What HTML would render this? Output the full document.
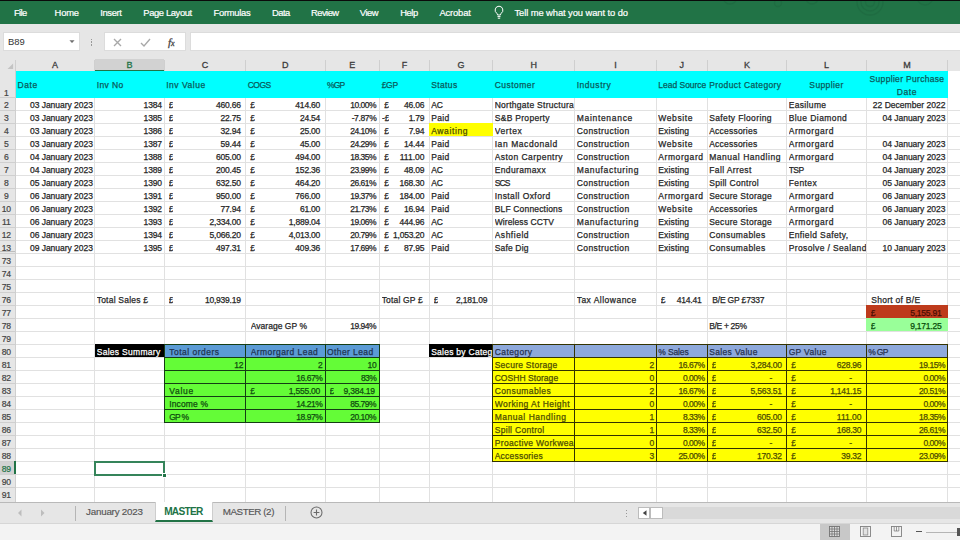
<!DOCTYPE html><html><head><meta charset="utf-8"><title>MASTER - Excel</title><style>
*{box-sizing:border-box;margin:0;padding:0}
html,body{width:960px;height:540px;overflow:hidden;background:#fff}
body{position:relative;font-family:"Liberation Sans",sans-serif;font-size:8.5px;color:#262626}
.a{position:absolute}
.c{position:absolute;height:13px;line-height:13px;white-space:nowrap;overflow:hidden;padding-top:1.5px;-webkit-text-stroke:0.25px}
.r{text-align:right;overflow:visible}
.ce{text-align:center}
.rib{position:absolute;top:5.8px;-webkit-text-stroke:0.2px;height:14px;line-height:14px;color:#fff;font-size:9.4px;white-space:nowrap}
.ch{position:absolute;top:58.8px;-webkit-text-stroke:0.3px;height:12.3px;line-height:13px;text-align:center;color:#3c3c3c;font-size:9px;}
.rhd{position:absolute;-webkit-text-stroke:0.2px;left:-1.5px;width:15.5px;height:13px;line-height:13px;text-align:center;color:#444;font-size:8.6px;padding-top:2.2px;letter-spacing:-0.25px;overflow:hidden}
.gl{position:absolute;background:#e1e1e1}
.bd{position:absolute;background:#1a1a00}
</style></head><body><div id="w" style="position:absolute;left:0;top:0;width:960px;height:540px;overflow:hidden">
<div class="a" style="left:0;top:0;width:960px;height:24px;background:#217346"></div>
<div class="a" style="left:0;top:0;width:960px;height:1px;background:#0a0a0a"></div>
<svg class="a" style="left:700px;top:1px" width="260" height="23" viewBox="0 0 260 23"><g fill="none" stroke="#1f6c42" stroke-width="1.3"><circle cx="170" cy="1" r="4.5"/><circle cx="170" cy="1" r="9"/><circle cx="170" cy="1" r="13"/><circle cx="78" cy="2" r="3.5"/><circle cx="112" cy="-3" r="6"/><circle cx="30" cy="-4" r="7"/><circle cx="225" cy="-4" r="8"/></g></svg>
<div class="rib" style="left:14.0px;letter-spacing:-0.662px">File</div>
<div class="rib" style="left:54.55px;letter-spacing:-0.156px">Home</div>
<div class="rib" style="left:100.3px;letter-spacing:-0.385px">Insert</div>
<div class="rib" style="left:143.3px;letter-spacing:-0.372px">Page Layout</div>
<div class="rib" style="left:213.5px;letter-spacing:-0.272px">Formulas</div>
<div class="rib" style="left:272.0px;letter-spacing:-0.539px">Data</div>
<div class="rib" style="left:311.0px;letter-spacing:-0.520px">Review</div>
<div class="rib" style="left:359.8px;letter-spacing:-0.451px">View</div>
<div class="rib" style="left:400.3px;letter-spacing:-0.483px">Help</div>
<div class="rib" style="left:439.5px;letter-spacing:-0.171px">Acrobat</div>
<div class="rib" style="left:514.5px;letter-spacing:-0.085px">Tell me what you want to do</div>
<svg class="a" style="left:493px;top:5px" width="12" height="15" viewBox="0 0 12 15"><path d="M6 1.2a3.9 3.9 0 0 0-2.2 7.1c.5.5.7 1 .7 1.7h3c0-.7.2-1.2.7-1.7A3.9 3.9 0 0 0 6 1.2z" fill="none" stroke="#fff" stroke-width="1"/><path d="M4.5 11.6h3M4.8 13.2h2.4" stroke="#fff" stroke-width="1" fill="none"/></svg>
<div class="a" style="left:0;top:24px;width:960px;height:35px;background:#e6e6e6"></div>
<div class="a" style="left:3px;top:32px;width:76.5px;height:19.3px;background:#fff;border:1px solid #dcdcdc"></div>
<div class="a" style="left:8px;top:35px;height:14px;line-height:14px;font-size:9.4px;color:#333">B89</div>
<svg class="a" style="left:69.3px;top:39.8px" width="6" height="3.4" viewBox="0 0 7 4"><path d="M0.5 0.3h6L3.5 3.6z" fill="#707070"/></svg>
<div class="a" style="left:91px;top:38.5px;width:1.2px;height:1.4px;background:#999"></div><div class="a" style="left:91px;top:41.4px;width:1.2px;height:1.4px;background:#999"></div><div class="a" style="left:91px;top:44.3px;width:1.2px;height:1.4px;background:#999"></div>
<div class="a" style="left:103.7px;top:32px;width:82.8px;height:19.3px;background:#fff;border:1px solid #dcdcdc"></div>
<svg class="a" style="left:113px;top:37.5px" width="9" height="9" viewBox="0 0 9 9"><path d="M1 1l7 7M8 1l-7 7" stroke="#a8a8a8" stroke-width="1.35" fill="none"/></svg>
<svg class="a" style="left:140px;top:37.5px" width="11" height="9" viewBox="0 0 11 9"><path d="M1 5l3 3L10 1" stroke="#a8a8a8" stroke-width="1.35" fill="none"/></svg>
<div class="a" style="left:168px;top:35px;height:14px;line-height:14px;font-size:11px;color:#444;-webkit-text-stroke:0.3px;font-family:'Liberation Serif',serif;font-style:italic">f<span style="font-size:8px">x</span></div>
<div class="a" style="left:190px;top:32px;width:771px;height:19.3px;background:#fff;border:1px solid #dcdcdc"></div>
<div class="a" style="left:0;top:59px;width:960px;height:12.3px;background:#e6e6e6"></div>
<svg class="a" style="left:7px;top:62.5px" width="6.5" height="6.5" viewBox="0 0 8 8"><path d="M7.5 0.5v7h-7z" fill="#c3c3c3"/></svg>
<div class="ch" style="left:15.5px;width:79.2px">A</div>
<div class="a" style="left:94.7px;top:59px;width:69.49999999999999px;height:12.3px;background:#d2d2d2;border-bottom:1.3px solid #217346"></div>
<div class="ch" style="left:94.7px;width:69.49999999999999px;color:#217346">B</div>
<div class="ch" style="left:164.2px;width:81.5px">C</div>
<div class="ch" style="left:245.7px;width:79.30000000000001px">D</div>
<div class="ch" style="left:325.0px;width:54.69999999999999px">E</div>
<div class="ch" style="left:379.7px;width:49.5px">F</div>
<div class="ch" style="left:429.2px;width:63.5px">G</div>
<div class="ch" style="left:492.7px;width:82.00000000000006px">H</div>
<div class="ch" style="left:574.7px;width:81.59999999999991px">I</div>
<div class="ch" style="left:656.3px;width:50.90000000000009px">J</div>
<div class="ch" style="left:707.2px;width:79.5px">K</div>
<div class="ch" style="left:786.7px;width:79.59999999999991px">L</div>
<div class="ch" style="left:866.3px;width:81.40000000000009px">M</div>
<div class="a" style="left:15.0px;top:60px;width:1px;height:11px;background:#cfcfcf"></div>
<div class="a" style="left:94.2px;top:60px;width:1px;height:11px;background:#cfcfcf"></div>
<div class="a" style="left:163.7px;top:60px;width:1px;height:11px;background:#cfcfcf"></div>
<div class="a" style="left:245.2px;top:60px;width:1px;height:11px;background:#cfcfcf"></div>
<div class="a" style="left:324.5px;top:60px;width:1px;height:11px;background:#cfcfcf"></div>
<div class="a" style="left:379.2px;top:60px;width:1px;height:11px;background:#cfcfcf"></div>
<div class="a" style="left:428.7px;top:60px;width:1px;height:11px;background:#cfcfcf"></div>
<div class="a" style="left:492.2px;top:60px;width:1px;height:11px;background:#cfcfcf"></div>
<div class="a" style="left:574.2px;top:60px;width:1px;height:11px;background:#cfcfcf"></div>
<div class="a" style="left:655.8px;top:60px;width:1px;height:11px;background:#cfcfcf"></div>
<div class="a" style="left:706.7px;top:60px;width:1px;height:11px;background:#cfcfcf"></div>
<div class="a" style="left:786.2px;top:60px;width:1px;height:11px;background:#cfcfcf"></div>
<div class="a" style="left:865.8px;top:60px;width:1px;height:11px;background:#cfcfcf"></div>
<div class="a" style="left:947.2px;top:60px;width:1px;height:11px;background:#cfcfcf"></div>
<div class="a" style="left:0;top:71.3px;width:15.5px;height:431px;background:#e6e6e6"></div>
<div class="rhd" style="top:84.5px">1</div>
<div class="rhd" style="top:97.3px">2</div>
<div class="rhd" style="top:110.3px">3</div>
<div class="rhd" style="top:123.3px">4</div>
<div class="rhd" style="top:136.3px">5</div>
<div class="rhd" style="top:149.3px">6</div>
<div class="rhd" style="top:162.3px">7</div>
<div class="rhd" style="top:175.3px">8</div>
<div class="rhd" style="top:188.3px">9</div>
<div class="rhd" style="top:201.3px">10</div>
<div class="rhd" style="top:214.3px">11</div>
<div class="rhd" style="top:227.3px">12</div>
<div class="rhd" style="top:240.3px">13</div>
<div class="rhd" style="top:253.3px">73</div>
<div class="rhd" style="top:266.3px">74</div>
<div class="rhd" style="top:279.3px">75</div>
<div class="rhd" style="top:292.3px">76</div>
<div class="rhd" style="top:305.3px">77</div>
<div class="rhd" style="top:318.3px">78</div>
<div class="rhd" style="top:331.3px">79</div>
<div class="rhd" style="top:344.3px">80</div>
<div class="rhd" style="top:357.3px">81</div>
<div class="rhd" style="top:370.3px">82</div>
<div class="rhd" style="top:383.3px">83</div>
<div class="rhd" style="top:396.3px">84</div>
<div class="rhd" style="top:409.3px">85</div>
<div class="rhd" style="top:422.3px">86</div>
<div class="rhd" style="top:435.3px">87</div>
<div class="rhd" style="top:448.3px">88</div>
<div class="a" style="left:0;top:461.3px;width:15.5px;height:13px;background:#d2d2d2;border-right:1.3px solid #217346"></div>
<div class="rhd" style="top:461.3px;color:#217346">89</div>
<div class="rhd" style="top:474.3px">90</div>
<div class="rhd" style="top:487.3px">91</div>
<div class="a" style="left:0;top:97px;width:15.5px;height:1px;background:#cfcfcf"></div>
<div class="a" style="left:0;top:109.8px;width:15.5px;height:1px;background:#cfcfcf"></div>
<div class="a" style="left:0;top:122.8px;width:15.5px;height:1px;background:#cfcfcf"></div>
<div class="a" style="left:0;top:135.8px;width:15.5px;height:1px;background:#cfcfcf"></div>
<div class="a" style="left:0;top:148.8px;width:15.5px;height:1px;background:#cfcfcf"></div>
<div class="a" style="left:0;top:161.8px;width:15.5px;height:1px;background:#cfcfcf"></div>
<div class="a" style="left:0;top:174.8px;width:15.5px;height:1px;background:#cfcfcf"></div>
<div class="a" style="left:0;top:187.8px;width:15.5px;height:1px;background:#cfcfcf"></div>
<div class="a" style="left:0;top:200.8px;width:15.5px;height:1px;background:#cfcfcf"></div>
<div class="a" style="left:0;top:213.8px;width:15.5px;height:1px;background:#cfcfcf"></div>
<div class="a" style="left:0;top:226.8px;width:15.5px;height:1px;background:#cfcfcf"></div>
<div class="a" style="left:0;top:239.8px;width:15.5px;height:1px;background:#cfcfcf"></div>
<div class="a" style="left:0;top:252.8px;width:15.5px;height:1px;background:#cfcfcf"></div>
<div class="a" style="left:0;top:265.8px;width:15.5px;height:1px;background:#cfcfcf"></div>
<div class="a" style="left:0;top:278.8px;width:15.5px;height:1px;background:#cfcfcf"></div>
<div class="a" style="left:0;top:291.8px;width:15.5px;height:1px;background:#cfcfcf"></div>
<div class="a" style="left:0;top:304.8px;width:15.5px;height:1px;background:#cfcfcf"></div>
<div class="a" style="left:0;top:317.8px;width:15.5px;height:1px;background:#cfcfcf"></div>
<div class="a" style="left:0;top:330.8px;width:15.5px;height:1px;background:#cfcfcf"></div>
<div class="a" style="left:0;top:343.8px;width:15.5px;height:1px;background:#cfcfcf"></div>
<div class="a" style="left:0;top:356.8px;width:15.5px;height:1px;background:#cfcfcf"></div>
<div class="a" style="left:0;top:369.8px;width:15.5px;height:1px;background:#cfcfcf"></div>
<div class="a" style="left:0;top:382.8px;width:15.5px;height:1px;background:#cfcfcf"></div>
<div class="a" style="left:0;top:395.8px;width:15.5px;height:1px;background:#cfcfcf"></div>
<div class="a" style="left:0;top:408.8px;width:15.5px;height:1px;background:#cfcfcf"></div>
<div class="a" style="left:0;top:421.8px;width:15.5px;height:1px;background:#cfcfcf"></div>
<div class="a" style="left:0;top:434.8px;width:15.5px;height:1px;background:#cfcfcf"></div>
<div class="a" style="left:0;top:447.8px;width:15.5px;height:1px;background:#cfcfcf"></div>
<div class="a" style="left:0;top:460.8px;width:15.5px;height:1px;background:#cfcfcf"></div>
<div class="a" style="left:0;top:473.8px;width:15.5px;height:1px;background:#cfcfcf"></div>
<div class="a" style="left:0;top:486.8px;width:15.5px;height:1px;background:#cfcfcf"></div>
<div class="a" style="left:0;top:250.8px;width:15.5px;height:1px;background:#bdbdbd"></div>
<div class="a" style="left:15px;top:71.3px;width:1px;height:431px;background:#cfcfcf"></div>
<div class="gl" style="left:94.2px;top:97.3px;width:1px;height:405px"></div>
<div class="gl" style="left:163.7px;top:97.3px;width:1px;height:405px"></div>
<div class="gl" style="left:245.2px;top:97.3px;width:1px;height:405px"></div>
<div class="gl" style="left:324.5px;top:97.3px;width:1px;height:405px"></div>
<div class="gl" style="left:379.2px;top:97.3px;width:1px;height:405px"></div>
<div class="gl" style="left:428.7px;top:97.3px;width:1px;height:405px"></div>
<div class="gl" style="left:492.2px;top:97.3px;width:1px;height:405px"></div>
<div class="gl" style="left:574.2px;top:97.3px;width:1px;height:405px"></div>
<div class="gl" style="left:655.8px;top:97.3px;width:1px;height:405px"></div>
<div class="gl" style="left:706.7px;top:97.3px;width:1px;height:405px"></div>
<div class="gl" style="left:786.2px;top:97.3px;width:1px;height:405px"></div>
<div class="gl" style="left:865.8px;top:97.3px;width:1px;height:405px"></div>
<div class="gl" style="left:947.2px;top:97.3px;width:1px;height:405px"></div>
<div class="gl" style="left:15.5px;top:109.8px;width:944.5px;height:1px"></div>
<div class="gl" style="left:15.5px;top:122.8px;width:944.5px;height:1px"></div>
<div class="gl" style="left:15.5px;top:135.8px;width:944.5px;height:1px"></div>
<div class="gl" style="left:15.5px;top:148.8px;width:944.5px;height:1px"></div>
<div class="gl" style="left:15.5px;top:161.8px;width:944.5px;height:1px"></div>
<div class="gl" style="left:15.5px;top:174.8px;width:944.5px;height:1px"></div>
<div class="gl" style="left:15.5px;top:187.8px;width:944.5px;height:1px"></div>
<div class="gl" style="left:15.5px;top:200.8px;width:944.5px;height:1px"></div>
<div class="gl" style="left:15.5px;top:213.8px;width:944.5px;height:1px"></div>
<div class="gl" style="left:15.5px;top:226.8px;width:944.5px;height:1px"></div>
<div class="gl" style="left:15.5px;top:239.8px;width:944.5px;height:1px"></div>
<div class="gl" style="left:15.5px;top:252.8px;width:944.5px;height:1px"></div>
<div class="gl" style="left:15.5px;top:265.8px;width:944.5px;height:1px"></div>
<div class="gl" style="left:15.5px;top:278.8px;width:944.5px;height:1px"></div>
<div class="gl" style="left:15.5px;top:291.8px;width:944.5px;height:1px"></div>
<div class="gl" style="left:15.5px;top:304.8px;width:944.5px;height:1px"></div>
<div class="gl" style="left:15.5px;top:317.8px;width:944.5px;height:1px"></div>
<div class="gl" style="left:15.5px;top:330.8px;width:944.5px;height:1px"></div>
<div class="gl" style="left:15.5px;top:343.8px;width:944.5px;height:1px"></div>
<div class="gl" style="left:15.5px;top:356.8px;width:944.5px;height:1px"></div>
<div class="gl" style="left:15.5px;top:369.8px;width:944.5px;height:1px"></div>
<div class="gl" style="left:15.5px;top:382.8px;width:944.5px;height:1px"></div>
<div class="gl" style="left:15.5px;top:395.8px;width:944.5px;height:1px"></div>
<div class="gl" style="left:15.5px;top:408.8px;width:944.5px;height:1px"></div>
<div class="gl" style="left:15.5px;top:421.8px;width:944.5px;height:1px"></div>
<div class="gl" style="left:15.5px;top:434.8px;width:944.5px;height:1px"></div>
<div class="gl" style="left:15.5px;top:447.8px;width:944.5px;height:1px"></div>
<div class="gl" style="left:15.5px;top:460.8px;width:944.5px;height:1px"></div>
<div class="gl" style="left:15.5px;top:473.8px;width:944.5px;height:1px"></div>
<div class="gl" style="left:15.5px;top:486.8px;width:944.5px;height:1px"></div>
<div class="a" style="left:15.5px;top:71px;width:932.2px;height:27px;background:#00ffff"></div>
<div class="c" style="left:17.5px;top:77.5px;color:#0a5a5a;overflow:visible;letter-spacing:0.581px;">Date</div>
<div class="c" style="left:96.7px;top:77.5px;color:#0a5a5a;overflow:visible;letter-spacing:0.399px;">Inv No</div>
<div class="c" style="left:166.2px;top:77.5px;color:#0a5a5a;overflow:visible;letter-spacing:0.518px;">Inv Value</div>
<div class="c" style="left:247.7px;top:77.5px;color:#0a5a5a;overflow:visible;letter-spacing:-0.512px;">COGS</div>
<div class="c" style="left:327.0px;top:77.5px;color:#0a5a5a;overflow:visible;letter-spacing:-0.832px;">%GP</div>
<div class="c" style="left:381.7px;top:77.5px;color:#0a5a5a;overflow:visible;letter-spacing:-0.322px;">£GP</div>
<div class="c" style="left:431.2px;top:77.5px;color:#0a5a5a;overflow:visible;letter-spacing:0.378px;">Status</div>
<div class="c" style="left:494.7px;top:77.5px;color:#0a5a5a;overflow:visible;letter-spacing:0.465px;">Customer</div>
<div class="c" style="left:576.7px;top:77.5px;color:#0a5a5a;overflow:visible;letter-spacing:0.530px;">Industry</div>
<div class="c" style="left:658.3px;top:77.5px;color:#0a5a5a;overflow:visible;letter-spacing:-0.018px;">Lead Source</div>
<div class="c" style="left:709.2px;top:77.5px;color:#0a5a5a;overflow:visible;letter-spacing:0.382px;">Product Category</div>
<div class="c ce" style="left:786.7px;width:79.59999999999991px;top:77.5px;color:#0a5a5a;letter-spacing:0.394px;">Supplier</div>
<div class="c ce" style="left:866.3px;width:81.40000000000009px;top:71.5px;color:#0a5a5a;letter-spacing:0.316px;">Supplier Purchase</div>
<div class="c ce" style="left:866.3px;width:81.40000000000009px;top:84.5px;color:#0a5a5a;letter-spacing:0.581px;">Date</div>
<div class="a" style="left:429.2px;top:123.3px;width:63.5px;height:13.000000000000014px;background:#ffff00"></div>
<div class="c r" style="left:15.5px;top:97.3px;width:77.37px;letter-spacing:-0.028px;">03 January 2023</div>
<div class="c r" style="left:94.7px;top:97.3px;width:67.12px;letter-spacing:-0.177px;">1384</div>
<div class="c" style="left:168.7px;top:97.3px;">£</div>
<div class="c r" style="left:164.2px;top:97.3px;width:76.58px;letter-spacing:-0.216px;">460.66</div>
<div class="c" style="left:250.2px;top:97.3px;">£</div>
<div class="c r" style="left:245.7px;top:97.3px;width:74.38px;letter-spacing:-0.216px;">414.60</div>
<div class="c r" style="left:325.0px;top:97.3px;width:51.23px;letter-spacing:-0.471px;">10.00%</div>
<div class="c" style="left:384.2px;top:97.3px;">£</div>
<div class="c r" style="left:379.7px;top:97.3px;width:44.58px;letter-spacing:-0.224px;">46.06</div>
<div class="c" style="left:431.2px;top:97.3px;width:61.00px;letter-spacing:-0.158px;">AC</div>
<div class="c" style="left:494.7px;top:97.3px;width:79.50px;letter-spacing:0.270px;">Northgate Structura</div>
<div class="c" style="left:576.7px;top:97.3px;width:79.10px;letter-spacing:0.000px;"></div>
<div class="c" style="left:658.3px;top:97.3px;width:48.40px;letter-spacing:0.000px;"></div>
<div class="c" style="left:709.2px;top:97.3px;width:77.00px;letter-spacing:0.000px;"></div>
<div class="c" style="left:788.7px;top:97.3px;width:77.10px;letter-spacing:0.345px;">Easilume</div>
<div class="c r" style="left:866.3px;top:97.3px;width:79.23px;letter-spacing:0.031px;">22 December 2022</div>
<div class="c r" style="left:15.5px;top:110.3px;width:77.37px;letter-spacing:-0.028px;">03 January 2023</div>
<div class="c r" style="left:94.7px;top:110.3px;width:67.12px;letter-spacing:-0.177px;">1385</div>
<div class="c" style="left:168.7px;top:110.3px;">£</div>
<div class="c r" style="left:164.2px;top:110.3px;width:76.58px;letter-spacing:-0.224px;">22.75</div>
<div class="c" style="left:250.2px;top:110.3px;">£</div>
<div class="c r" style="left:245.7px;top:110.3px;width:74.38px;letter-spacing:-0.224px;">24.54</div>
<div class="c r" style="left:325.0px;top:110.3px;width:51.33px;letter-spacing:-0.372px;">-7.87%</div>
<div class="c" style="left:381.9px;top:110.3px;">-£</div>
<div class="c r" style="left:379.7px;top:110.3px;width:44.56px;letter-spacing:-0.236px;">1.79</div>
<div class="c" style="left:431.2px;top:110.3px;width:61.00px;letter-spacing:0.361px;">Paid</div>
<div class="c" style="left:494.7px;top:110.3px;width:79.50px;letter-spacing:0.300px;">S&amp;B Property</div>
<div class="c" style="left:576.7px;top:110.3px;width:79.10px;letter-spacing:0.694px;">Maintenance</div>
<div class="c" style="left:658.3px;top:110.3px;width:48.40px;letter-spacing:0.590px;">Website</div>
<div class="c" style="left:709.2px;top:110.3px;width:77.00px;letter-spacing:0.366px;">Safety Flooring</div>
<div class="c" style="left:788.7px;top:110.3px;width:77.10px;letter-spacing:0.434px;">Blue Diamond</div>
<div class="c r" style="left:866.3px;top:110.3px;width:79.17px;letter-spacing:-0.028px;">04 January 2023</div>
<div class="c r" style="left:15.5px;top:123.3px;width:77.37px;letter-spacing:-0.028px;">03 January 2023</div>
<div class="c r" style="left:94.7px;top:123.3px;width:67.12px;letter-spacing:-0.177px;">1386</div>
<div class="c" style="left:168.7px;top:123.3px;">£</div>
<div class="c r" style="left:164.2px;top:123.3px;width:76.58px;letter-spacing:-0.224px;">32.94</div>
<div class="c" style="left:250.2px;top:123.3px;">£</div>
<div class="c r" style="left:245.7px;top:123.3px;width:74.38px;letter-spacing:-0.224px;">25.00</div>
<div class="c r" style="left:325.0px;top:123.3px;width:51.23px;letter-spacing:-0.471px;">24.10%</div>
<div class="c" style="left:384.2px;top:123.3px;">£</div>
<div class="c r" style="left:379.7px;top:123.3px;width:44.56px;letter-spacing:-0.236px;">7.94</div>
<div class="c" style="left:431.2px;top:123.3px;width:61.00px;letter-spacing:0.617px;color:#4d4d00;">Awaiting</div>
<div class="c" style="left:494.7px;top:123.3px;width:79.50px;letter-spacing:0.603px;">Vertex</div>
<div class="c" style="left:576.7px;top:123.3px;width:79.10px;letter-spacing:0.434px;">Construction</div>
<div class="c" style="left:658.3px;top:123.3px;width:48.40px;letter-spacing:0.133px;">Existing</div>
<div class="c" style="left:709.2px;top:123.3px;width:77.00px;letter-spacing:0.216px;">Accessories</div>
<div class="c" style="left:788.7px;top:123.3px;width:77.10px;letter-spacing:0.571px;">Armorgard</div>
<div class="c r" style="left:866.3px;top:123.3px;width:79.20px;letter-spacing:0.000px;"></div>
<div class="c r" style="left:15.5px;top:136.3px;width:77.37px;letter-spacing:-0.028px;">03 January 2023</div>
<div class="c r" style="left:94.7px;top:136.3px;width:67.12px;letter-spacing:-0.177px;">1387</div>
<div class="c" style="left:168.7px;top:136.3px;">£</div>
<div class="c r" style="left:164.2px;top:136.3px;width:76.58px;letter-spacing:-0.224px;">59.44</div>
<div class="c" style="left:250.2px;top:136.3px;">£</div>
<div class="c r" style="left:245.7px;top:136.3px;width:74.38px;letter-spacing:-0.224px;">45.00</div>
<div class="c r" style="left:325.0px;top:136.3px;width:51.23px;letter-spacing:-0.471px;">24.29%</div>
<div class="c" style="left:384.2px;top:136.3px;">£</div>
<div class="c r" style="left:379.7px;top:136.3px;width:44.58px;letter-spacing:-0.224px;">14.44</div>
<div class="c" style="left:431.2px;top:136.3px;width:61.00px;letter-spacing:0.361px;">Paid</div>
<div class="c" style="left:494.7px;top:136.3px;width:79.50px;letter-spacing:0.567px;">Ian Macdonald</div>
<div class="c" style="left:576.7px;top:136.3px;width:79.10px;letter-spacing:0.434px;">Construction</div>
<div class="c" style="left:658.3px;top:136.3px;width:48.40px;letter-spacing:0.590px;">Website</div>
<div class="c" style="left:709.2px;top:136.3px;width:77.00px;letter-spacing:0.216px;">Accessories</div>
<div class="c" style="left:788.7px;top:136.3px;width:77.10px;letter-spacing:0.571px;">Armorgard</div>
<div class="c r" style="left:866.3px;top:136.3px;width:79.17px;letter-spacing:-0.028px;">04 January 2023</div>
<div class="c r" style="left:15.5px;top:149.3px;width:77.37px;letter-spacing:-0.028px;">04 January 2023</div>
<div class="c r" style="left:94.7px;top:149.3px;width:67.12px;letter-spacing:-0.177px;">1388</div>
<div class="c" style="left:168.7px;top:149.3px;">£</div>
<div class="c r" style="left:164.2px;top:149.3px;width:76.58px;letter-spacing:-0.216px;">605.00</div>
<div class="c" style="left:250.2px;top:149.3px;">£</div>
<div class="c r" style="left:245.7px;top:149.3px;width:74.38px;letter-spacing:-0.216px;">494.00</div>
<div class="c r" style="left:325.0px;top:149.3px;width:51.23px;letter-spacing:-0.471px;">18.35%</div>
<div class="c" style="left:384.2px;top:149.3px;">£</div>
<div class="c r" style="left:379.7px;top:149.3px;width:44.79px;letter-spacing:-0.006px;">111.00</div>
<div class="c" style="left:431.2px;top:149.3px;width:61.00px;letter-spacing:0.361px;">Paid</div>
<div class="c" style="left:494.7px;top:149.3px;width:79.50px;letter-spacing:0.452px;">Aston Carpentry</div>
<div class="c" style="left:576.7px;top:149.3px;width:79.10px;letter-spacing:0.434px;">Construction</div>
<div class="c" style="left:658.3px;top:149.3px;width:48.40px;letter-spacing:0.571px;">Armorgard</div>
<div class="c" style="left:709.2px;top:149.3px;width:77.00px;letter-spacing:0.533px;">Manual Handling</div>
<div class="c" style="left:788.7px;top:149.3px;width:77.10px;letter-spacing:0.571px;">Armorgard</div>
<div class="c r" style="left:866.3px;top:149.3px;width:79.17px;letter-spacing:-0.028px;">04 January 2023</div>
<div class="c r" style="left:15.5px;top:162.3px;width:77.37px;letter-spacing:-0.028px;">04 January 2023</div>
<div class="c r" style="left:94.7px;top:162.3px;width:67.12px;letter-spacing:-0.177px;">1389</div>
<div class="c" style="left:168.7px;top:162.3px;">£</div>
<div class="c r" style="left:164.2px;top:162.3px;width:76.58px;letter-spacing:-0.216px;">200.45</div>
<div class="c" style="left:250.2px;top:162.3px;">£</div>
<div class="c r" style="left:245.7px;top:162.3px;width:74.38px;letter-spacing:-0.216px;">152.36</div>
<div class="c r" style="left:325.0px;top:162.3px;width:51.23px;letter-spacing:-0.471px;">23.99%</div>
<div class="c" style="left:384.2px;top:162.3px;">£</div>
<div class="c r" style="left:379.7px;top:162.3px;width:44.58px;letter-spacing:-0.224px;">48.09</div>
<div class="c" style="left:431.2px;top:162.3px;width:61.00px;letter-spacing:-0.158px;">AC</div>
<div class="c" style="left:494.7px;top:162.3px;width:79.50px;letter-spacing:0.366px;">Enduramaxx</div>
<div class="c" style="left:576.7px;top:162.3px;width:79.10px;letter-spacing:0.656px;">Manufacturing</div>
<div class="c" style="left:658.3px;top:162.3px;width:48.40px;letter-spacing:0.133px;">Existing</div>
<div class="c" style="left:709.2px;top:162.3px;width:77.00px;letter-spacing:0.386px;">Fall Arrest</div>
<div class="c" style="left:788.7px;top:162.3px;width:77.10px;letter-spacing:-0.553px;">TSP</div>
<div class="c r" style="left:866.3px;top:162.3px;width:79.17px;letter-spacing:-0.028px;">04 January 2023</div>
<div class="c r" style="left:15.5px;top:175.3px;width:77.37px;letter-spacing:-0.028px;">05 January 2023</div>
<div class="c r" style="left:94.7px;top:175.3px;width:67.12px;letter-spacing:-0.177px;">1390</div>
<div class="c" style="left:168.7px;top:175.3px;">£</div>
<div class="c r" style="left:164.2px;top:175.3px;width:76.58px;letter-spacing:-0.216px;">632.50</div>
<div class="c" style="left:250.2px;top:175.3px;">£</div>
<div class="c r" style="left:245.7px;top:175.3px;width:74.38px;letter-spacing:-0.216px;">464.20</div>
<div class="c r" style="left:325.0px;top:175.3px;width:51.23px;letter-spacing:-0.471px;">26.61%</div>
<div class="c" style="left:384.2px;top:175.3px;">£</div>
<div class="c r" style="left:379.7px;top:175.3px;width:44.58px;letter-spacing:-0.216px;">168.30</div>
<div class="c" style="left:431.2px;top:175.3px;width:61.00px;letter-spacing:-0.158px;">AC</div>
<div class="c" style="left:494.7px;top:175.3px;width:79.50px;letter-spacing:-0.868px;">SCS</div>
<div class="c" style="left:576.7px;top:175.3px;width:79.10px;letter-spacing:0.434px;">Construction</div>
<div class="c" style="left:658.3px;top:175.3px;width:48.40px;letter-spacing:0.133px;">Existing</div>
<div class="c" style="left:709.2px;top:175.3px;width:77.00px;letter-spacing:0.307px;">Spill Control</div>
<div class="c" style="left:788.7px;top:175.3px;width:77.10px;letter-spacing:0.401px;">Fentex</div>
<div class="c r" style="left:866.3px;top:175.3px;width:79.17px;letter-spacing:-0.028px;">05 January 2023</div>
<div class="c r" style="left:15.5px;top:188.3px;width:77.37px;letter-spacing:-0.028px;">06 January 2023</div>
<div class="c r" style="left:94.7px;top:188.3px;width:67.12px;letter-spacing:-0.177px;">1391</div>
<div class="c" style="left:168.7px;top:188.3px;">£</div>
<div class="c r" style="left:164.2px;top:188.3px;width:76.58px;letter-spacing:-0.216px;">950.00</div>
<div class="c" style="left:250.2px;top:188.3px;">£</div>
<div class="c r" style="left:245.7px;top:188.3px;width:74.38px;letter-spacing:-0.216px;">766.00</div>
<div class="c r" style="left:325.0px;top:188.3px;width:51.23px;letter-spacing:-0.471px;">19.37%</div>
<div class="c" style="left:384.2px;top:188.3px;">£</div>
<div class="c r" style="left:379.7px;top:188.3px;width:44.58px;letter-spacing:-0.216px;">184.00</div>
<div class="c" style="left:431.2px;top:188.3px;width:61.00px;letter-spacing:0.361px;">Paid</div>
<div class="c" style="left:494.7px;top:188.3px;width:79.50px;letter-spacing:0.425px;">Install Oxford</div>
<div class="c" style="left:576.7px;top:188.3px;width:79.10px;letter-spacing:0.434px;">Construction</div>
<div class="c" style="left:658.3px;top:188.3px;width:48.40px;letter-spacing:0.571px;">Armorgard</div>
<div class="c" style="left:709.2px;top:188.3px;width:77.00px;letter-spacing:0.266px;">Secure Storage</div>
<div class="c" style="left:788.7px;top:188.3px;width:77.10px;letter-spacing:0.571px;">Armorgard</div>
<div class="c r" style="left:866.3px;top:188.3px;width:79.17px;letter-spacing:-0.028px;">06 January 2023</div>
<div class="c r" style="left:15.5px;top:201.3px;width:77.37px;letter-spacing:-0.028px;">06 January 2023</div>
<div class="c r" style="left:94.7px;top:201.3px;width:67.12px;letter-spacing:-0.177px;">1392</div>
<div class="c" style="left:168.7px;top:201.3px;">£</div>
<div class="c r" style="left:164.2px;top:201.3px;width:76.58px;letter-spacing:-0.224px;">77.94</div>
<div class="c" style="left:250.2px;top:201.3px;">£</div>
<div class="c r" style="left:245.7px;top:201.3px;width:74.38px;letter-spacing:-0.224px;">61.00</div>
<div class="c r" style="left:325.0px;top:201.3px;width:51.23px;letter-spacing:-0.471px;">21.73%</div>
<div class="c" style="left:384.2px;top:201.3px;">£</div>
<div class="c r" style="left:379.7px;top:201.3px;width:44.58px;letter-spacing:-0.224px;">16.94</div>
<div class="c" style="left:431.2px;top:201.3px;width:61.00px;letter-spacing:0.361px;">Paid</div>
<div class="c" style="left:494.7px;top:201.3px;width:79.50px;letter-spacing:0.168px;">BLF Connections</div>
<div class="c" style="left:576.7px;top:201.3px;width:79.10px;letter-spacing:0.434px;">Construction</div>
<div class="c" style="left:658.3px;top:201.3px;width:48.40px;letter-spacing:0.590px;">Website</div>
<div class="c" style="left:709.2px;top:201.3px;width:77.00px;letter-spacing:0.216px;">Accessories</div>
<div class="c" style="left:788.7px;top:201.3px;width:77.10px;letter-spacing:0.571px;">Armorgard</div>
<div class="c r" style="left:866.3px;top:201.3px;width:79.17px;letter-spacing:-0.028px;">06 January 2023</div>
<div class="c r" style="left:15.5px;top:214.3px;width:77.37px;letter-spacing:-0.028px;">06 January 2023</div>
<div class="c r" style="left:94.7px;top:214.3px;width:67.12px;letter-spacing:-0.177px;">1393</div>
<div class="c" style="left:168.7px;top:214.3px;">£</div>
<div class="c r" style="left:164.2px;top:214.3px;width:76.56px;letter-spacing:-0.236px;">2,334.00</div>
<div class="c" style="left:250.2px;top:214.3px;">£</div>
<div class="c r" style="left:245.7px;top:214.3px;width:74.36px;letter-spacing:-0.236px;">1,889.04</div>
<div class="c r" style="left:325.0px;top:214.3px;width:51.23px;letter-spacing:-0.471px;">19.06%</div>
<div class="c" style="left:384.2px;top:214.3px;">£</div>
<div class="c r" style="left:379.7px;top:214.3px;width:44.58px;letter-spacing:-0.216px;">444.96</div>
<div class="c" style="left:431.2px;top:214.3px;width:61.00px;letter-spacing:-0.158px;">AC</div>
<div class="c" style="left:494.7px;top:214.3px;width:79.50px;letter-spacing:0.092px;">Wireless CCTV</div>
<div class="c" style="left:576.7px;top:214.3px;width:79.10px;letter-spacing:0.656px;">Manufacturing</div>
<div class="c" style="left:658.3px;top:214.3px;width:48.40px;letter-spacing:0.133px;">Existing</div>
<div class="c" style="left:709.2px;top:214.3px;width:77.00px;letter-spacing:0.266px;">Secure Storage</div>
<div class="c" style="left:788.7px;top:214.3px;width:77.10px;letter-spacing:0.571px;">Armorgard</div>
<div class="c r" style="left:866.3px;top:214.3px;width:79.17px;letter-spacing:-0.028px;">06 January 2023</div>
<div class="c r" style="left:15.5px;top:227.3px;width:77.37px;letter-spacing:-0.028px;">06 January 2023</div>
<div class="c r" style="left:94.7px;top:227.3px;width:67.12px;letter-spacing:-0.177px;">1394</div>
<div class="c" style="left:168.7px;top:227.3px;">£</div>
<div class="c r" style="left:164.2px;top:227.3px;width:76.56px;letter-spacing:-0.236px;">5,066.20</div>
<div class="c" style="left:250.2px;top:227.3px;">£</div>
<div class="c r" style="left:245.7px;top:227.3px;width:74.36px;letter-spacing:-0.236px;">4,013.00</div>
<div class="c r" style="left:325.0px;top:227.3px;width:51.23px;letter-spacing:-0.471px;">20.79%</div>
<div class="c" style="left:384.2px;top:227.3px;">£</div>
<div class="c r" style="left:379.7px;top:227.3px;width:44.56px;letter-spacing:-0.236px;">1,053.20</div>
<div class="c" style="left:431.2px;top:227.3px;width:61.00px;letter-spacing:-0.158px;">AC</div>
<div class="c" style="left:494.7px;top:227.3px;width:79.50px;letter-spacing:0.513px;">Ashfield</div>
<div class="c" style="left:576.7px;top:227.3px;width:79.10px;letter-spacing:0.434px;">Construction</div>
<div class="c" style="left:658.3px;top:227.3px;width:48.40px;letter-spacing:0.133px;">Existing</div>
<div class="c" style="left:709.2px;top:227.3px;width:77.00px;letter-spacing:0.407px;">Consumables</div>
<div class="c" style="left:788.7px;top:227.3px;width:77.10px;letter-spacing:0.380px;">Enfield Safety,</div>
<div class="c r" style="left:866.3px;top:227.3px;width:79.20px;letter-spacing:0.000px;"></div>
<div class="c r" style="left:15.5px;top:240.3px;width:77.37px;letter-spacing:-0.028px;">09 January 2023</div>
<div class="c r" style="left:94.7px;top:240.3px;width:67.12px;letter-spacing:-0.177px;">1395</div>
<div class="c" style="left:168.7px;top:240.3px;">£</div>
<div class="c r" style="left:164.2px;top:240.3px;width:76.58px;letter-spacing:-0.216px;">497.31</div>
<div class="c" style="left:250.2px;top:240.3px;">£</div>
<div class="c r" style="left:245.7px;top:240.3px;width:74.38px;letter-spacing:-0.216px;">409.36</div>
<div class="c r" style="left:325.0px;top:240.3px;width:51.23px;letter-spacing:-0.471px;">17.69%</div>
<div class="c" style="left:384.2px;top:240.3px;">£</div>
<div class="c r" style="left:379.7px;top:240.3px;width:44.58px;letter-spacing:-0.224px;">87.95</div>
<div class="c" style="left:431.2px;top:240.3px;width:61.00px;letter-spacing:0.361px;">Paid</div>
<div class="c" style="left:494.7px;top:240.3px;width:79.50px;letter-spacing:0.165px;">Safe Dig</div>
<div class="c" style="left:576.7px;top:240.3px;width:79.10px;letter-spacing:0.434px;">Construction</div>
<div class="c" style="left:658.3px;top:240.3px;width:48.40px;letter-spacing:0.133px;">Existing</div>
<div class="c" style="left:709.2px;top:240.3px;width:77.00px;letter-spacing:0.407px;">Consumables</div>
<div class="c" style="left:788.7px;top:240.3px;width:77.10px;letter-spacing:0.375px;">Prosolve / Sealand</div>
<div class="c r" style="left:866.3px;top:240.3px;width:79.17px;letter-spacing:-0.028px;">10 January 2023</div>
<div class="c" style="left:96.7px;top:292.3px;width:67.00px;letter-spacing:0.218px;">Total Sales £</div>
<div class="c" style="left:168.7px;top:292.3px;">£</div>
<div class="c r" style="left:164.2px;top:292.3px;width:76.57px;letter-spacing:-0.229px;">10,939.19</div>
<div class="c" style="left:381.7px;top:292.3px;width:47.00px;letter-spacing:0.170px;">Total GP £</div>
<div class="c" style="left:433.7px;top:292.3px;">£</div>
<div class="c r" style="left:429.2px;top:292.3px;width:58.06px;letter-spacing:-0.236px;">2,181.09</div>
<div class="c" style="left:576.7px;top:292.3px;width:79.10px;letter-spacing:0.479px;">Tax Allowance</div>
<div class="c" style="left:660.8px;top:292.3px;">£</div>
<div class="c r" style="left:656.3px;top:292.3px;width:45.18px;letter-spacing:-0.216px;">414.41</div>
<div class="c" style="left:712.2px;top:292.3px;width:74.00px;letter-spacing:-0.167px;">B/E GP £7337</div>
<div class="c" style="left:871.3px;top:292.3px;width:75.90px;letter-spacing:0.267px;">Short of B/E</div>
<div class="a" style="left:866.3px;top:305.3px;width:81.40000000000009px;height:13.0px;background:#be3b1c"></div>
<div class="c" style="left:870.8px;top:305.3px;color:#4a0d05;">£</div>
<div class="c r" style="left:866.3px;top:305.3px;width:75.16px;letter-spacing:-0.236px;color:#4a0d05;">5,155.91</div>
<div class="a" style="left:866.3px;top:318.3px;width:81.40000000000009px;height:13.0px;background:#99ff99"></div>
<div class="c" style="left:870.8px;top:318.3px;color:#0a4d0a;">£</div>
<div class="c r" style="left:866.3px;top:318.3px;width:75.16px;letter-spacing:-0.236px;color:#0a4d0a;">9,171.25</div>
<div class="c" style="left:250.7px;top:318.3px;width:73.80px;letter-spacing:0.040px;">Avarage GP %</div>
<div class="c r" style="left:325.0px;top:318.3px;width:51.23px;letter-spacing:-0.471px;">19.94%</div>
<div class="c" style="left:709.2px;top:318.3px;width:77.00px;letter-spacing:-0.329px;">B/E + 25%</div>
<div class="a" style="left:94.7px;top:344.3px;width:69.49999999999999px;height:13.0px;background:#000"></div>
<div class="c" style="left:96.7px;top:344.3px;width:67.00px;letter-spacing:0.293px;color:#fff;">Sales Summary</div>
<div class="a" style="left:164.2px;top:344.3px;width:215.5px;height:13.0px;background:#5b9bd5"></div>
<div class="c" style="left:169.2px;top:344.3px;width:76.00px;letter-spacing:0.490px;color:#1f3350;">Total orders</div>
<div class="c" style="left:250.7px;top:344.3px;width:73.80px;letter-spacing:0.436px;color:#1f3350;">Armorgard Lead</div>
<div class="c" style="left:327.0px;top:344.3px;width:52.20px;letter-spacing:0.404px;color:#1f3350;">Other Lead</div>
<div class="a" style="left:164.2px;top:357.3px;width:215.5px;height:65.0px;background:#64fc37"></div>
<div class="c r" style="left:164.2px;top:357.3px;width:79.12px;letter-spacing:-0.177px;color:#0f4d0f;">12</div>
<div class="c r" style="left:245.7px;top:357.3px;width:76.92px;letter-spacing:-0.177px;color:#0f4d0f;">2</div>
<div class="c r" style="left:325.0px;top:357.3px;width:51.52px;letter-spacing:-0.177px;color:#0f4d0f;">10</div>
<div class="c r" style="left:245.7px;top:370.3px;width:76.63px;letter-spacing:-0.471px;color:#0f4d0f;">16.67%</div>
<div class="c r" style="left:325.0px;top:370.3px;width:51.01px;letter-spacing:-0.687px;color:#0f4d0f;">83%</div>
<div class="c" style="left:169.2px;top:383.3px;width:76.00px;letter-spacing:0.713px;color:#0f4d0f;">Value</div>
<div class="c" style="left:250.2px;top:383.3px;color:#0f4d0f;">£</div>
<div class="c r" style="left:245.7px;top:383.3px;width:74.36px;letter-spacing:-0.236px;color:#0f4d0f;">1,555.00</div>
<div class="c" style="left:329.5px;top:383.3px;color:#0f4d0f;">£</div>
<div class="c r" style="left:325.0px;top:383.3px;width:49.76px;letter-spacing:-0.236px;color:#0f4d0f;">9,384.19</div>
<div class="c" style="left:169.2px;top:396.3px;width:76.00px;letter-spacing:0.138px;color:#0f4d0f;">Income %</div>
<div class="c r" style="left:245.7px;top:396.3px;width:76.63px;letter-spacing:-0.471px;color:#0f4d0f;">14.21%</div>
<div class="c r" style="left:325.0px;top:396.3px;width:51.23px;letter-spacing:-0.471px;color:#0f4d0f;">85.79%</div>
<div class="c" style="left:169.2px;top:409.3px;width:76.00px;letter-spacing:-0.689px;color:#0f4d0f;">GP %</div>
<div class="c r" style="left:245.7px;top:409.3px;width:76.63px;letter-spacing:-0.471px;color:#0f4d0f;">18.97%</div>
<div class="c r" style="left:325.0px;top:409.3px;width:51.23px;letter-spacing:-0.471px;color:#0f4d0f;">20.10%</div>
<div class="a" style="left:163.7px;top:343.8px;width:216.5px;height:1px;background:#143d14"></div>
<div class="a" style="left:163.7px;top:356.8px;width:216.5px;height:1px;background:#143d14"></div>
<div class="a" style="left:163.7px;top:369.8px;width:216.5px;height:1px;background:#143d14"></div>
<div class="a" style="left:163.7px;top:382.8px;width:216.5px;height:1px;background:#143d14"></div>
<div class="a" style="left:163.7px;top:395.8px;width:216.5px;height:1px;background:#143d14"></div>
<div class="a" style="left:163.7px;top:408.8px;width:216.5px;height:1px;background:#143d14"></div>
<div class="a" style="left:163.7px;top:421.8px;width:216.5px;height:1px;background:#143d14"></div>
<div class="a" style="left:163.7px;top:343.8px;width:1px;height:79.0px;background:#143d14"></div>
<div class="a" style="left:245.2px;top:343.8px;width:1px;height:79.0px;background:#143d14"></div>
<div class="a" style="left:324.5px;top:343.8px;width:1px;height:79.0px;background:#143d14"></div>
<div class="a" style="left:379.2px;top:343.8px;width:1px;height:79.0px;background:#143d14"></div>
<div class="a" style="left:429.2px;top:344.3px;width:63.5px;height:13.0px;background:#000"></div>
<div class="c" style="left:431.2px;top:344.3px;width:61.00px;letter-spacing:0.260px;color:#fff;">Sales by Category</div>
<div class="a" style="left:492.7px;top:344.3px;width:455.00000000000006px;height:13.0px;background:#8ea9db"></div>
<div class="c" style="left:494.7px;top:344.3px;width:79.50px;letter-spacing:0.421px;color:#26314d;">Category</div>
<div class="c" style="left:658.3px;top:344.3px;width:48.40px;letter-spacing:-0.126px;color:#26314d;">% Sales</div>
<div class="c" style="left:709.2px;top:344.3px;width:77.00px;letter-spacing:0.351px;color:#26314d;">Sales Value</div>
<div class="c" style="left:788.7px;top:344.3px;width:77.10px;letter-spacing:0.315px;color:#26314d;">GP Value</div>
<div class="c" style="left:868.3px;top:344.3px;width:78.90px;letter-spacing:-0.727px;color:#26314d;">% GP</div>
<div class="a" style="left:492.7px;top:357.3px;width:455.00000000000006px;height:104.0px;background:#ffff00"></div>
<div class="c" style="left:494.7px;top:357.3px;width:79.50px;letter-spacing:0.266px;color:#4d4d00;">Secure Storage</div>
<div class="c r" style="left:574.7px;top:357.3px;width:79.42px;letter-spacing:-0.177px;color:#4d4d00;">2</div>
<div class="c r" style="left:656.3px;top:357.3px;width:48.23px;letter-spacing:-0.471px;color:#4d4d00;">16.67%</div>
<div class="c" style="left:711.7px;top:357.3px;color:#4d4d00;">£</div>
<div class="c r" style="left:707.2px;top:357.3px;width:74.56px;letter-spacing:-0.236px;color:#4d4d00;">3,284.00</div>
<div class="c" style="left:791.2px;top:357.3px;color:#4d4d00;">£</div>
<div class="c r" style="left:786.7px;top:357.3px;width:74.68px;letter-spacing:-0.216px;color:#4d4d00;">628.96</div>
<div class="c r" style="left:866.3px;top:357.3px;width:78.73px;letter-spacing:-0.471px;color:#4d4d00;">19.15%</div>
<div class="c" style="left:494.7px;top:370.3px;width:79.50px;letter-spacing:0.049px;color:#4d4d00;">COSHH Storage</div>
<div class="c r" style="left:574.7px;top:370.3px;width:79.42px;letter-spacing:-0.177px;color:#4d4d00;">0</div>
<div class="c r" style="left:656.3px;top:370.3px;width:48.17px;letter-spacing:-0.530px;color:#4d4d00;">0.00%</div>
<div class="c" style="left:711.7px;top:370.3px;color:#4d4d00;">£</div>
<div class="c r" style="left:707.2px;top:370.3px;width:65.62px;letter-spacing:0.419px;color:#4d4d00;">-</div>
<div class="c" style="left:791.2px;top:370.3px;color:#4d4d00;">£</div>
<div class="c r" style="left:786.7px;top:370.3px;width:65.72px;letter-spacing:0.419px;color:#4d4d00;">-</div>
<div class="c r" style="left:866.3px;top:370.3px;width:78.67px;letter-spacing:-0.530px;color:#4d4d00;">0.00%</div>
<div class="c" style="left:494.7px;top:383.3px;width:79.50px;letter-spacing:0.407px;color:#4d4d00;">Consumables</div>
<div class="c r" style="left:574.7px;top:383.3px;width:79.42px;letter-spacing:-0.177px;color:#4d4d00;">2</div>
<div class="c r" style="left:656.3px;top:383.3px;width:48.23px;letter-spacing:-0.471px;color:#4d4d00;">16.67%</div>
<div class="c" style="left:711.7px;top:383.3px;color:#4d4d00;">£</div>
<div class="c r" style="left:707.2px;top:383.3px;width:74.56px;letter-spacing:-0.236px;color:#4d4d00;">5,563.51</div>
<div class="c" style="left:791.2px;top:383.3px;color:#4d4d00;">£</div>
<div class="c r" style="left:786.7px;top:383.3px;width:74.66px;letter-spacing:-0.236px;color:#4d4d00;">1,141.15</div>
<div class="c r" style="left:866.3px;top:383.3px;width:78.73px;letter-spacing:-0.471px;color:#4d4d00;">20.51%</div>
<div class="c" style="left:494.7px;top:396.3px;width:79.50px;letter-spacing:0.436px;color:#4d4d00;">Working At Height</div>
<div class="c r" style="left:574.7px;top:396.3px;width:79.42px;letter-spacing:-0.177px;color:#4d4d00;">0</div>
<div class="c r" style="left:656.3px;top:396.3px;width:48.17px;letter-spacing:-0.530px;color:#4d4d00;">0.00%</div>
<div class="c" style="left:711.7px;top:396.3px;color:#4d4d00;">£</div>
<div class="c r" style="left:707.2px;top:396.3px;width:65.62px;letter-spacing:0.419px;color:#4d4d00;">-</div>
<div class="c" style="left:791.2px;top:396.3px;color:#4d4d00;">£</div>
<div class="c r" style="left:786.7px;top:396.3px;width:65.72px;letter-spacing:0.419px;color:#4d4d00;">-</div>
<div class="c r" style="left:866.3px;top:396.3px;width:78.67px;letter-spacing:-0.530px;color:#4d4d00;">0.00%</div>
<div class="c" style="left:494.7px;top:409.3px;width:79.50px;letter-spacing:0.533px;color:#4d4d00;">Manual Handling</div>
<div class="c r" style="left:574.7px;top:409.3px;width:79.42px;letter-spacing:-0.177px;color:#4d4d00;">1</div>
<div class="c r" style="left:656.3px;top:409.3px;width:48.17px;letter-spacing:-0.530px;color:#4d4d00;">8.33%</div>
<div class="c" style="left:711.7px;top:409.3px;color:#4d4d00;">£</div>
<div class="c r" style="left:707.2px;top:409.3px;width:74.58px;letter-spacing:-0.216px;color:#4d4d00;">605.00</div>
<div class="c" style="left:791.2px;top:409.3px;color:#4d4d00;">£</div>
<div class="c r" style="left:786.7px;top:409.3px;width:74.89px;letter-spacing:-0.006px;color:#4d4d00;">111.00</div>
<div class="c r" style="left:866.3px;top:409.3px;width:78.73px;letter-spacing:-0.471px;color:#4d4d00;">18.35%</div>
<div class="c" style="left:494.7px;top:422.3px;width:79.50px;letter-spacing:0.307px;color:#4d4d00;">Spill Control</div>
<div class="c r" style="left:574.7px;top:422.3px;width:79.42px;letter-spacing:-0.177px;color:#4d4d00;">1</div>
<div class="c r" style="left:656.3px;top:422.3px;width:48.17px;letter-spacing:-0.530px;color:#4d4d00;">8.33%</div>
<div class="c" style="left:711.7px;top:422.3px;color:#4d4d00;">£</div>
<div class="c r" style="left:707.2px;top:422.3px;width:74.58px;letter-spacing:-0.216px;color:#4d4d00;">632.50</div>
<div class="c" style="left:791.2px;top:422.3px;color:#4d4d00;">£</div>
<div class="c r" style="left:786.7px;top:422.3px;width:74.68px;letter-spacing:-0.216px;color:#4d4d00;">168.30</div>
<div class="c r" style="left:866.3px;top:422.3px;width:78.73px;letter-spacing:-0.471px;color:#4d4d00;">26.61%</div>
<div class="c" style="left:494.7px;top:435.3px;width:79.50px;letter-spacing:0.361px;color:#4d4d00;">Proactive Workwea</div>
<div class="c r" style="left:574.7px;top:435.3px;width:79.42px;letter-spacing:-0.177px;color:#4d4d00;">0</div>
<div class="c r" style="left:656.3px;top:435.3px;width:48.17px;letter-spacing:-0.530px;color:#4d4d00;">0.00%</div>
<div class="c" style="left:711.7px;top:435.3px;color:#4d4d00;">£</div>
<div class="c r" style="left:707.2px;top:435.3px;width:65.62px;letter-spacing:0.419px;color:#4d4d00;">-</div>
<div class="c" style="left:791.2px;top:435.3px;color:#4d4d00;">£</div>
<div class="c r" style="left:786.7px;top:435.3px;width:65.72px;letter-spacing:0.419px;color:#4d4d00;">-</div>
<div class="c r" style="left:866.3px;top:435.3px;width:78.67px;letter-spacing:-0.530px;color:#4d4d00;">0.00%</div>
<div class="c" style="left:494.7px;top:448.3px;width:79.50px;letter-spacing:0.216px;color:#4d4d00;">Accessories</div>
<div class="c r" style="left:574.7px;top:448.3px;width:79.42px;letter-spacing:-0.177px;color:#4d4d00;">3</div>
<div class="c r" style="left:656.3px;top:448.3px;width:48.23px;letter-spacing:-0.471px;color:#4d4d00;">25.00%</div>
<div class="c" style="left:711.7px;top:448.3px;color:#4d4d00;">£</div>
<div class="c r" style="left:707.2px;top:448.3px;width:74.58px;letter-spacing:-0.216px;color:#4d4d00;">170.32</div>
<div class="c" style="left:791.2px;top:448.3px;color:#4d4d00;">£</div>
<div class="c r" style="left:786.7px;top:448.3px;width:74.68px;letter-spacing:-0.224px;color:#4d4d00;">39.32</div>
<div class="c r" style="left:866.3px;top:448.3px;width:78.73px;letter-spacing:-0.471px;color:#4d4d00;">23.09%</div>
<div class="a" style="left:492.2px;top:343.8px;width:456.00000000000006px;height:1px;background:#333300"></div>
<div class="a" style="left:492.2px;top:356.8px;width:456.00000000000006px;height:1px;background:#333300"></div>
<div class="a" style="left:492.2px;top:369.8px;width:456.00000000000006px;height:1px;background:#333300"></div>
<div class="a" style="left:492.2px;top:382.8px;width:456.00000000000006px;height:1px;background:#333300"></div>
<div class="a" style="left:492.2px;top:395.8px;width:456.00000000000006px;height:1px;background:#333300"></div>
<div class="a" style="left:492.2px;top:408.8px;width:456.00000000000006px;height:1px;background:#333300"></div>
<div class="a" style="left:492.2px;top:421.8px;width:456.00000000000006px;height:1px;background:#333300"></div>
<div class="a" style="left:492.2px;top:434.8px;width:456.00000000000006px;height:1px;background:#333300"></div>
<div class="a" style="left:492.2px;top:447.8px;width:456.00000000000006px;height:1px;background:#333300"></div>
<div class="a" style="left:492.2px;top:460.8px;width:456.00000000000006px;height:1px;background:#333300"></div>
<div class="a" style="left:492.2px;top:343.8px;width:1px;height:118.0px;background:#333300"></div>
<div class="a" style="left:574.2px;top:343.8px;width:1px;height:118.0px;background:#333300"></div>
<div class="a" style="left:655.8px;top:343.8px;width:1px;height:118.0px;background:#333300"></div>
<div class="a" style="left:706.7px;top:343.8px;width:1px;height:118.0px;background:#333300"></div>
<div class="a" style="left:786.2px;top:343.8px;width:1px;height:118.0px;background:#333300"></div>
<div class="a" style="left:865.8px;top:343.8px;width:1px;height:118.0px;background:#333300"></div>
<div class="a" style="left:947.2px;top:343.8px;width:1px;height:118.0px;background:#333300"></div>
<div class="a" style="left:93.7px;top:461.0px;width:71.49999999999999px;height:15px;border:2px solid #35845a"></div>
<div class="a" style="left:14px;top:461.3px;width:1.6px;height:13px;background:#217346"></div>
<div class="a" style="left:162.0px;top:472.7px;width:5px;height:5px;background:#217346;border:1px solid #fff"></div>
<div class="a" style="left:0;top:502px;width:960px;height:1px;background:#b9b9b9"></div>
<div class="a" style="left:0;top:503px;width:960px;height:20.3px;background:#e6e6e6"></div>
<div class="a" style="left:0;top:523.3px;width:960px;height:16.7px;background:#f3f3f3"></div>
<div class="a" style="left:0;top:523px;width:960px;height:1px;background:#d6d6d6"></div>
<svg class="a" style="left:17px;top:508.5px" width="30" height="8" viewBox="0 0 30 8"><path d="M4.5 0.5v7L1 4z" fill="#bdbdbd"/><path d="M24 0.5v7L27.5 4z" fill="#bdbdbd"/></svg>
<div class="a" style="left:74.5px;top:505.5px;width:1px;height:15px;background:#b5b5b5"></div>
<div class="a" style="left:86px;top:505px;height:14px;line-height:14px;font-size:9.8px;color:#555;letter-spacing:-0.216px;-webkit-text-stroke:0.15px">January 2023</div>
<div class="a" style="left:155px;top:502px;width:57.5px;height:19.6px;background:#fff;border-bottom:2px solid #217346;border-left:1px solid #cdcdcd;border-right:1px solid #cdcdcd"></div>
<div class="a" style="left:164.2px;top:505px;height:14px;line-height:14px;font-size:10.1px;color:#217346;font-weight:bold;letter-spacing:-0.724px">MASTER</div>
<div class="a" style="left:222.7px;top:505px;height:14px;line-height:14px;font-size:9.8px;color:#555;letter-spacing:-0.424px;-webkit-text-stroke:0.15px">MASTER (2)</div>
<div class="a" style="left:284.5px;top:505.5px;width:1px;height:15px;background:#b5b5b5"></div>
<svg class="a" style="left:310.2px;top:506.1px" width="13" height="13" viewBox="0 0 13 13"><circle cx="6.5" cy="6.5" r="5.5" fill="none" stroke="#6a6a6a" stroke-width="1.05"/><path d="M6.5 3.6v5.8M3.6 6.5h5.8" stroke="#6a6a6a" stroke-width="1.1"/></svg>
<div class="a" style="left:625.7px;top:509.5px;width:1.2px;height:1.4px;background:#999"></div><div class="a" style="left:625.7px;top:512.6px;width:1.2px;height:1.4px;background:#999"></div><div class="a" style="left:625.7px;top:515.7px;width:1.2px;height:1.4px;background:#999"></div>
<div class="a" style="left:638px;top:507px;width:322px;height:11.7px;background:#d9d9d9"></div>
<div class="a" style="left:638px;top:507px;width:12px;height:11.7px;background:#fff;border:0.6px solid #bcbcbc"></div>
<svg class="a" style="left:641.8px;top:510px" width="5" height="6" viewBox="0 0 5 6"><path d="M4.5 0.3v5.4L0.8 3z" fill="#444"/></svg>
<div class="a" style="left:650px;top:507px;width:13px;height:11.7px;background:#fff;border:0.6px solid #bcbcbc"></div>
<div class="a" style="left:820px;top:524px;width:29.5px;height:16px;background:#c8c8c8"></div>
<svg class="a" style="left:829px;top:526px" width="11" height="11" viewBox="0 0 11 11"><rect x="0.5" y="0.5" width="10" height="10" fill="#dcdcdc" stroke="#737373" stroke-width="0.9"/><path d="M0.5 3h10M0.5 5.5h10M0.5 8h10M3 0.5v10M5.5 0.5v10M8 0.5v10" stroke="#737373" stroke-width="0.8"/></svg>
<svg class="a" style="left:860px;top:526px" width="11" height="11" viewBox="0 0 11 11"><rect x="0.5" y="0.5" width="10" height="10" fill="none" stroke="#808080" stroke-width="0.9"/><rect x="3.2" y="2" width="4.6" height="7" fill="#e2e2e2" stroke="#8a8a8a" stroke-width="0.8"/></svg>
<svg class="a" style="left:890.5px;top:526px" width="11" height="11" viewBox="0 0 11 11"><rect x="0.5" y="0.5" width="10" height="10" fill="none" stroke="#808080" stroke-width="0.9"/><path d="M3.2 0.5v4.5h4.6v-4.5M5.5 0.5v4.5" fill="none" stroke="#808080" stroke-width="0.8"/></svg>
<div class="a" style="left:915.8px;top:531px;width:6px;height:1.2px;background:#555"></div>
<div class="a" style="left:926px;top:531.6px;width:34px;height:1px;background:#b5b5b5"></div>
<div class="a" style="left:956.7px;top:527.8px;width:3.3px;height:8.6px;background:#555"></div>
</div></body></html>
